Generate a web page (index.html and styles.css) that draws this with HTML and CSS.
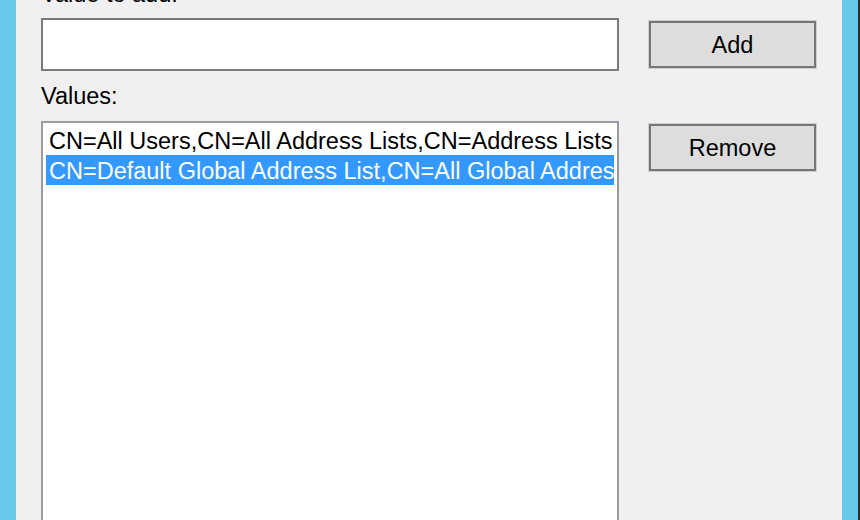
FILE: index.html
```html
<!DOCTYPE html>
<html>
<head>
<meta charset="utf-8">
<link rel="stylesheet" href="styles.css">
</head>
<body>
<div class="screen">
  <div class="frame frame-left"></div>
  <div class="dialog">
    <div class="col-main">
      <div class="label label-top">Value to add:</div>
      <div class="textbox"></div>
      <div class="label label-values">Values:</div>
      <div class="listbox">
        <div class="item">CN=All Users,CN=All Address Lists,CN=Address Lists</div>
        <div class="item selected">CN=Default Global Address List,CN=All Global Address</div>
      </div>
    </div>
    <div class="col-buttons">
      <div class="button btn-add">Add</div>
      <div class="button btn-remove">Remove</div>
    </div>
  </div>
  <div class="frame frame-right"></div>
</div>
</body>
</html>
```
FILE: styles.css
```css
html, body {
  margin: 0;
  padding: 0;
  width: 860px;
  height: 520px;
  overflow: hidden;
  background: #f0f0f0;
}

.screen {
  display: flex;
  width: 860px;
  height: 520px;
  overflow: hidden;
  font-family: "Liberation Sans", Arial, sans-serif;
  font-size: 23.5px;
  color: #000;
}

.frame {
  width: 16px;
  flex: none;
  background: #66c9ea;
}

.frame-right {
  border-right: 2px solid #2e2e2e;
}

.dialog {
  flex: 1;
  display: flex;
  align-items: flex-start;
  gap: 30px;
  padding-left: 25px;
  background: #f0f0f0;
  overflow: hidden;
}

.col-main {
  width: 578px;
  flex: none;
  display: flex;
  flex-direction: column;
}

.col-main > * {
  flex: none;
}

.label {
  line-height: 26px;
  height: 26px;
  white-space: nowrap;
}

.label-top {
  margin-top: -19px;
}

.textbox {
  margin-top: 11px;
  height: 49px;
  background: #fff;
  border: 2px solid #7a7a7a;
}

.label-values {
  margin-top: 12px;
}

.listbox {
  margin-top: 12px;
  height: 420px;
  background: #fff;
  border: 2px solid #9a9da3;
  padding: 2px 3px 0 3px;
  overflow: hidden;
}

.item {
  height: 30px;
  box-sizing: border-box;
  padding: 3px 0 0 3px;
  line-height: 27px;
  white-space: nowrap;
  overflow: hidden;
}

.item.selected {
  background: #3399ff;
  color: #fff;
}

.col-buttons {
  width: 167px;
  flex: none;
  display: flex;
  flex-direction: column;
}

.col-buttons > * {
  flex: none;
}

.button {
  height: 43px;
  background: #dddddd;
  border: 2px solid #777777;
  box-shadow: 0 0 0 1px #cfcfcf;
  display: flex;
  align-items: center;
  justify-content: center;
  line-height: 26px;
  padding-top: 1px;
  box-sizing: content-box;
}

.btn-add {
  margin-top: 21px;
  height: 42px;
}

.btn-remove {
  margin-top: 56px;
  height: 42px;
}
```
